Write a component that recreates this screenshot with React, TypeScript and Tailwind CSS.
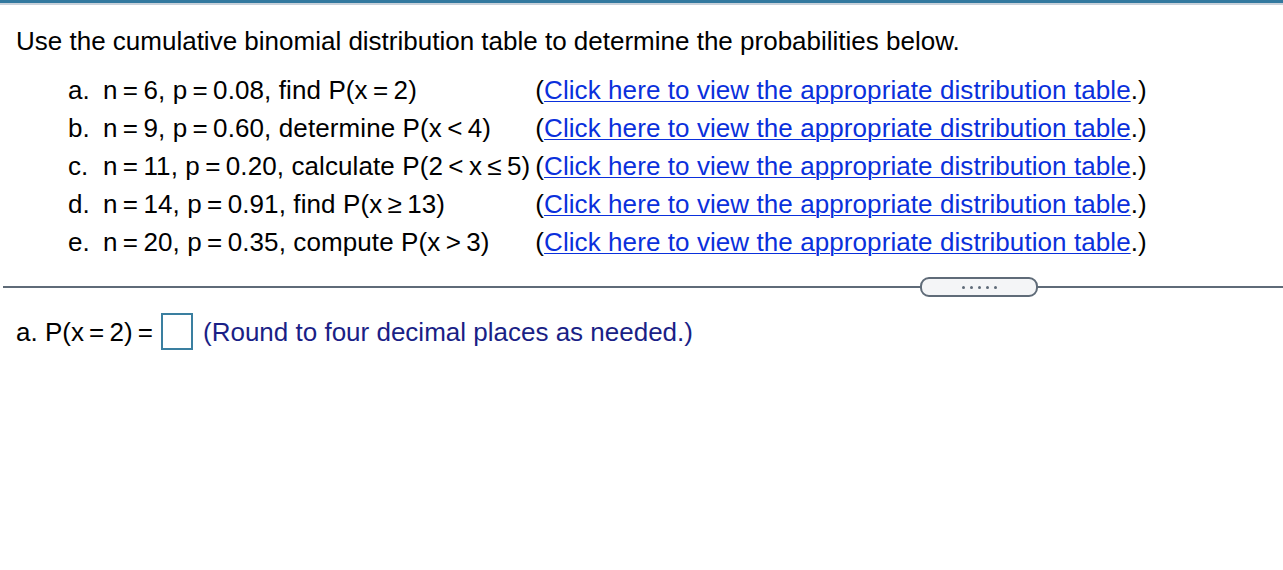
const rows = [
  { label: "a.", text: "n\u2009=\u20096, p\u2009=\u20090.08, find P(x\u2009=\u20092)" },
  { label: "b.", text: "n\u2009=\u20099, p\u2009=\u20090.60, determine P(x\u2009<\u20094)" },
  { label: "c.", text: "n\u2009=\u200911, p\u2009=\u20090.20, calculate P(2\u2009<\u2009x\u2009\u2264\u20095)" },
  { label: "d.", text: "n\u2009=\u200914, p\u2009=\u20090.91, find P(x\u2009\u2265\u200913)" },
  { label: "e.", text: "n\u2009=\u200920, p\u2009=\u20090.35, compute P(x\u2009>\u20093)" },
]

export default function App() {
  return (
    <div className="min-h-[570px] bg-white font-['Liberation_Sans',Arial,sans-serif] text-[26px] text-black">
      <div className="h-[3px] bg-[#33799f]" />
      <div className="h-[2px] bg-[#c9d1da]" />

      <div className="px-4 pt-[21px]">
        <p className="leading-[30px]">
          Use the cumulative binomial distribution table to determine the probabilities below.
        </p>

        <div className="mt-[19px] ml-[52px] grid grid-cols-[auto_auto] justify-start gap-x-[5px] gap-y-[8px]">
          {rows.map((r) => (
            <div key={r.label} className="contents">
              <div className="flex leading-[30px] tracking-[0.1px]">
                <span className="w-[35px]">{r.label}</span>
                <span>{r.text}</span>
              </div>
              <div className="leading-[30px] tracking-[0.08px]">
                (
                <a href="#" className="text-[#0a30dc] underline decoration-1 underline-offset-2">
                  Click here to view the appropriate distribution table
                </a>
                .)
              </div>
            </div>
          ))}
        </div>
      </div>

      <div className="mt-[20px] flex items-center pl-[3px]">
        <div className="h-[2px] w-[917px] bg-[#5f6b78]" />
        <div className="flex h-[20px] w-[118px] items-center justify-center gap-[5px] rounded-[9px] border-2 border-[#5f6b78] bg-[#f4f5f7]">
          {[0, 1, 2, 3, 4].map((i) => (
            <span key={i} className="size-[3px] rounded-full bg-[#5f6b78]" />
          ))}
        </div>
        <div className="h-[2px] flex-1 bg-[#5f6b78]" />
      </div>

      <div className="mt-[16px] flex items-center pl-4">
        <span className="leading-[30px]">{"a. P(x\u2009=\u20092)\u2009="}</span>
        <span className="ml-[8px] h-[37px] w-[32px] border-2 border-[#3a7fa0] bg-white" />
        <span className="ml-[10px] leading-[30px] text-[#1a1f86]">(Round to four decimal places as needed.)</span>
      </div>
    </div>
  )
}
